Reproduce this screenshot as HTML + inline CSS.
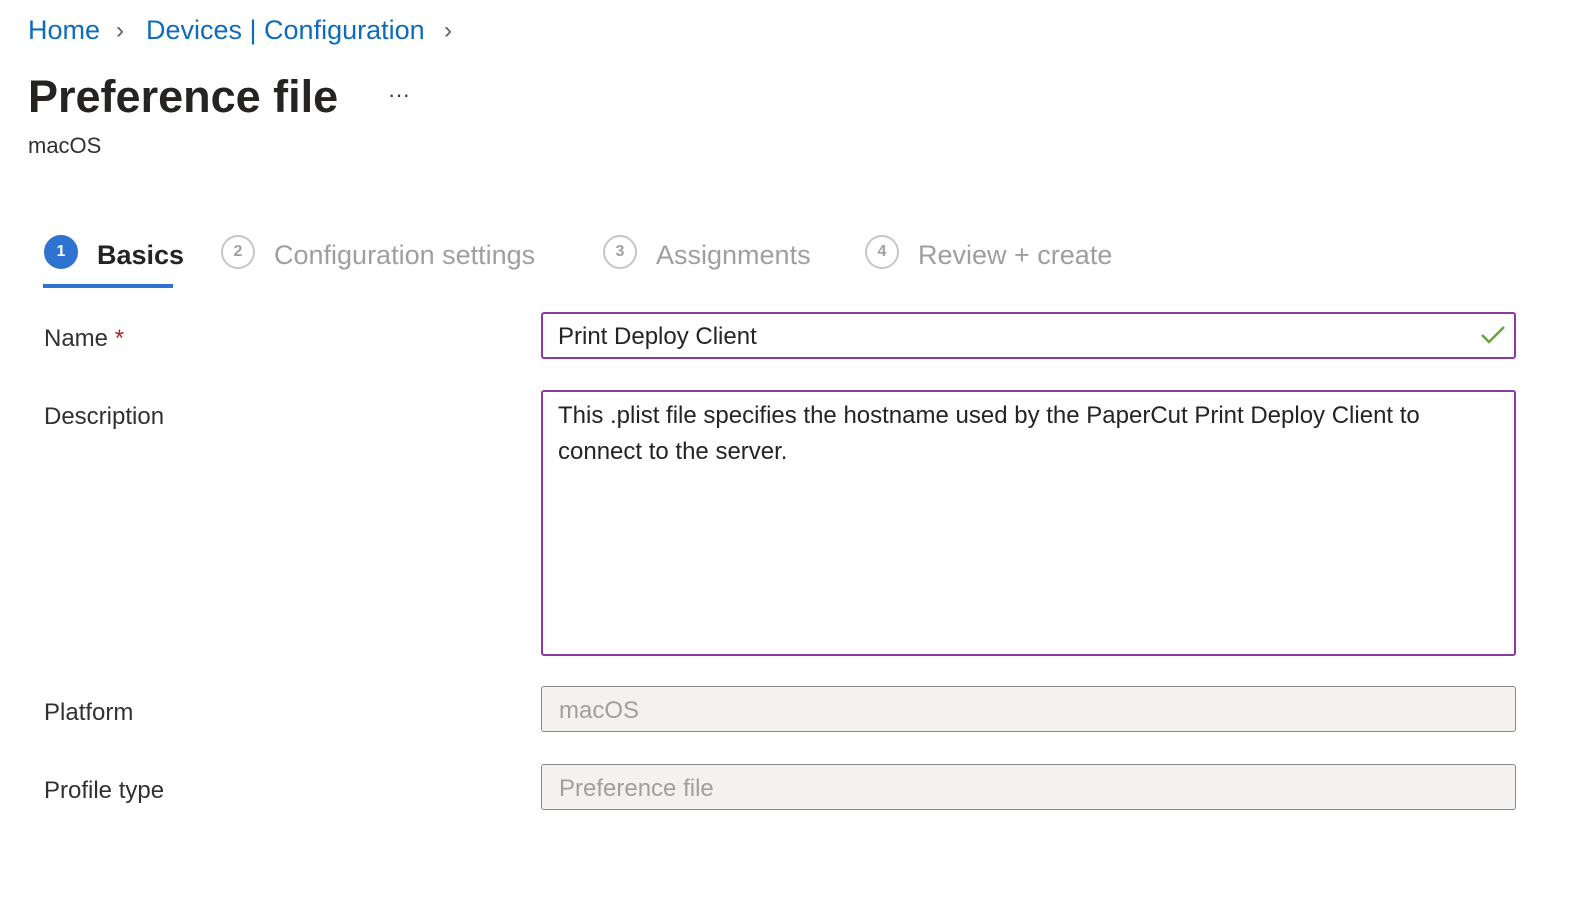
<!DOCTYPE html>
<html><head><style>
body{margin:0;width:1580px;height:910px;background:#fff;font-family:"Liberation Sans",sans-serif;color:#323130;position:relative;overflow:hidden}
.a{position:absolute;white-space:nowrap}
.bc{color:#0f6cbd;font-size:27px;top:15px}
.box{position:absolute;left:541px;width:975px;border:2px solid #8b3a9f;border-radius:3px;box-sizing:border-box}
.dis{position:absolute;left:541px;width:975px;height:46px;border:1px solid #8a8886;background:#f3f2f1;border-radius:3px;box-sizing:border-box;color:#a19f9d;font-size:24px;padding:10px 17px}
.lab{font-size:24px;left:44px}
.circ{position:absolute;width:34px;height:34px;border-radius:50%;box-sizing:border-box;border:2px solid #c8c6c4;color:#a19f9d;font-size:16px;font-weight:bold;text-align:center;line-height:30px;top:235px}
.tab{font-size:27px;color:#a19f9d;top:240px}
</style></head><body>
<div class="a bc" style="left:28px">Home</div>
<div class="a" style="left:116px;top:17px;font-size:24px;color:#605e5c">&#x203A;</div>
<div class="a bc" style="left:146px">Devices | Configuration</div>
<div class="a" style="left:444px;top:17px;font-size:24px;color:#605e5c">&#x203A;</div>
<div class="a" style="left:28px;top:71px;font-size:45px;font-weight:bold;color:#252423">Preference file</div>
<div class="a" style="left:388px;top:82px;font-size:22px;color:#323130">···</div>
<div class="a" style="left:28px;top:133px;font-size:22px">macOS</div>

<div class="circ" style="left:44px;background:#2f73d0;border-color:#2f73d0;color:#fff">1</div>
<div class="a tab" style="left:97px;color:#252423;font-weight:bold">Basics</div>
<div class="a" style="left:43px;top:284px;width:130px;height:4px;background:#2f73d0"></div>
<div class="circ" style="left:221px">2</div>
<div class="a tab" style="left:274px">Configuration settings</div>
<div class="circ" style="left:603px">3</div>
<div class="a tab" style="left:656px">Assignments</div>
<div class="circ" style="left:865px">4</div>
<div class="a tab" style="left:918px">Review + create</div>

<div class="a lab" style="top:325px">Name <span style="color:#a4262c">*</span></div>
<div class="box" style="top:312px;height:47px"></div>
<div class="a" style="left:558px;top:323px;font-size:24px;color:#252423">Print Deploy Client</div>
<svg class="a" style="left:1479px;top:324px" width="28" height="22"><path d="M3 11l7 7L25 3" fill="none" stroke="#6aa23b" stroke-width="2.5"/></svg>

<div class="a lab" style="top:403px">Description</div>
<div class="box" style="top:390px;height:266px"></div>
<div class="a" style="left:558px;top:398px;font-size:24px;line-height:36px;color:#252423">This .plist file specifies the hostname used by the PaperCut Print Deploy Client to<br>connect to the server.</div>

<div class="a lab" style="top:699px">Platform</div>
<div class="dis" style="top:686px">macOS</div>
<div class="a lab" style="top:777px">Profile type</div>
<div class="dis" style="top:764px">Preference file</div>
</body></html>
